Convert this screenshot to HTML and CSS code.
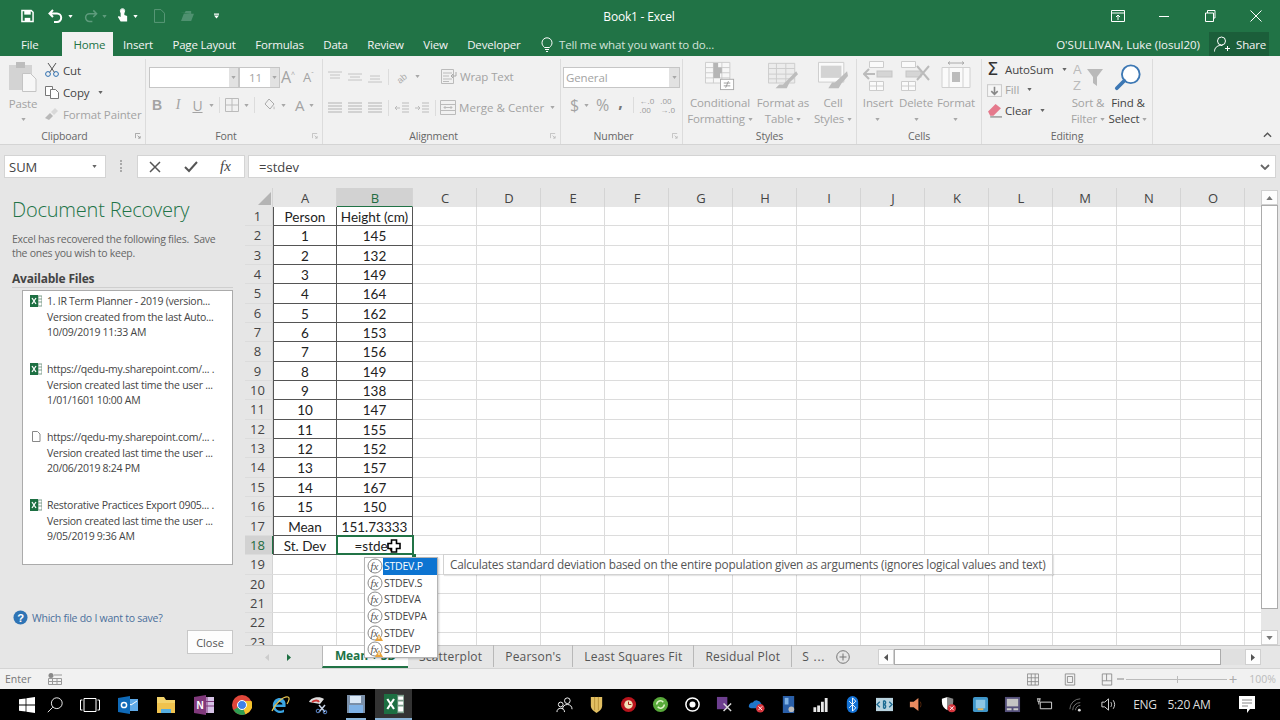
FILE: index.html
```html
<!DOCTYPE html>
<html lang="en">
<head>
<meta charset="utf-8">
<title>Book1 - Excel</title>
<link rel="stylesheet" href="styles.css">
</head>
<body>
<svg class="defs" xmlns="http://www.w3.org/2000/svg">
  <symbol id="caret" viewBox="0 0 6 4"><path d="M0 0h6L3 4z" fill="currentColor"/></symbol>
  <symbol id="xl" viewBox="0 0 12 12"><rect x="5" y="1" width="7" height="10" fill="#fff" stroke="#7c9d8b"/><path d="M8 1v10M5 4h7M5 7h7" stroke="#7c9d8b" fill="none"/><rect y="0" width="8" height="12" fill="#1d6f42"/><path d="M2 3l4 6M6 3L2 9" stroke="#fff" stroke-width="1.3"/></symbol>
  <symbol id="fxc" viewBox="0 0 16 16"><circle cx="8" cy="8" r="7" fill="#fff" stroke="#8a8a8a"/><text x="3.6" y="11.5" font-family="Liberation Serif" font-style="italic" font-size="11" fill="#555">fx</text></symbol>
  <symbol id="warn" viewBox="0 0 8 7"><path d="M4 0l4 7H0z" fill="#e8a33a"/><path d="M4 2v3" stroke="#fff"/></symbol>
  <symbol id="lines3" viewBox="0 0 14 12"><path d="M0 1h14M0 4h14M0 7h14M0 10h14" stroke="#b4b4b4" stroke-width="1.2"/></symbol>
</svg>

<header class="titlebar">
  <div class="qat">
    <svg class="qi qi-save" viewBox="0 0 14 14"><path d="M1 1h10l2 2v10H1z" fill="none" stroke="#fff" stroke-width="1.6"/><rect x="3.5" y="1.5" width="7" height="4" fill="#fff"/><rect x="4" y="9" width="6" height="4" fill="#fff"/></svg>
    <svg class="qi qi-undo" viewBox="0 0 16 14"><path d="M5 1L1.5 4.5 5 8M2 4.5h7a4.2 4.2 0 0 1 0 8.4H6" fill="none" stroke="#fff" stroke-width="2"/></svg>
    <svg class="qc" viewBox="0 0 6 4"><use href="#caret"/></svg>
    <svg class="qi qi-redo dim" viewBox="0 0 16 14"><path d="M11 1l3.5 3.5L11 8M14 4.5H7a4.2 4.2 0 0 0 0 8.4h3" fill="none" stroke="#5e9b7c" stroke-width="1.6"/></svg>
    <svg class="qc dimc" viewBox="0 0 6 4"><use href="#caret"/></svg>
    <svg class="qi qi-touch" viewBox="0 0 14 16"><path d="M5 2.5a2 2 0 0 1 4 0V7l3 1v6H5L2 9l1-1 2 1z" fill="#fff"/><circle cx="7" cy="2.5" r="2.4" fill="none" stroke="#fff"/></svg>
    <svg class="qc" viewBox="0 0 6 4"><use href="#caret"/></svg>
    <svg class="qi qi-new" viewBox="0 0 12 15"><path d="M.5.5h7l4 4v10H.5z" fill="none" stroke="#5e9b7c"/></svg>
    <svg class="qi qi-open" viewBox="0 0 16 13"><path d="M0 3h5l1-2h6v3H4L1 12h11l3-8H12" fill="#4f9170"/></svg>
    <svg class="qc qc-more" viewBox="0 0 6 6"><path d="M0 0h6v1.5H0zM0 2.5h6L3 6z" fill="#fff"/></svg>
  </div>
  <div class="doc-title">Book1 - Excel</div>
  <div class="winctl">
    <svg class="wi" viewBox="0 0 14 12"><path d="M.5.5h13v11H.5zM.5 3h13M7 10V5M5 7l2-2 2 2" fill="none" stroke="#fff"/></svg>
    <svg class="wi" viewBox="0 0 14 12"><path d="M2 6.5h10" stroke="#fff"/></svg>
    <svg class="wi" viewBox="0 0 14 12"><path d="M2.5 3v8.500h8V3zM4.500 3V.5h7.500V8h-1.500" fill="none" stroke="#fff"/></svg>
    <svg class="wi" viewBox="0 0 14 12"><path d="M1.500.5l11 11M12.500.5l-11 11" stroke="#fff"/></svg>
  </div>
</header>

<nav class="tabs">
  <span class="tab file">File</span>
  <span class="tab home">Home</span>
  <span class="tab">Insert</span>
  <span class="tab">Page Layout</span>
  <span class="tab">Formulas</span>
  <span class="tab">Data</span>
  <span class="tab">Review</span>
  <span class="tab">View</span>
  <span class="tab">Developer</span>
  <span class="tell">
    <svg class="bulb" viewBox="0 0 12 15"><path d="M3.500 10.500C2 9 1 7.800 1 5.800a5 5 0 0 1 10 0c0 2-1 3.200-2.500 4.700zM4 12.500h4M5 14.500h2" fill="none" stroke="#fff"/></svg>
    Tell me what you want to do...
  </span>
  <span class="user">O'SULLIVAN, Luke (losul20)</span>
  <span class="share">
    <svg class="shi" viewBox="0 0 16 16"><circle cx="7.500" cy="5" r="4" fill="none" stroke="#fff"/><path d="M.5 15.500c0-3.500 2.500-6 6-6h2M11 12.500h5M13.500 10v5" fill="none" stroke="#fff"/></svg>
    Share
  </span>
</nav>

<section class="ribbon">
  <div class="group g-clip">
    <div class="g-body">
      <div class="paste off">
        <svg class="paste-i" viewBox="0 0 28 30"><rect x="0" y="3" width="23" height="25" fill="#d3d3d3"/><rect x="7" y="0" width="9" height="6" fill="#bdbdbd"/><path d="M13.500 11.500h8l5.500 5.500v12.500H13.500z" fill="#f7f7f7" stroke="#c4c4c4"/></svg>
        <span class="paste-t">Paste</span>
        <svg class="car" viewBox="0 0 6 4"><use href="#caret"/></svg>
      </div>
      <div class="clip-col">
        <div class="clip-row on"><svg class="ci" viewBox="0 0 14 14"><path d="M3 0l6.500 9.500M11 0L4.500 9.500" stroke="#555" fill="none"/><circle cx="3" cy="11" r="2.400" fill="none" stroke="#2d6fb0"/><circle cx="11" cy="11" r="2.400" fill="none" stroke="#2d6fb0"/></svg>Cut</div>
        <div class="clip-row on"><svg class="ci" viewBox="0 0 14 14"><path d="M.5 1.500h7v9h-7z" fill="#fff" stroke="#777"/><path d="M5.500 4.500h5l3 3v6h-8z" fill="#fff" stroke="#777"/></svg>Copy<svg class="car car-s" viewBox="0 0 6 4"><use href="#caret"/></svg></div>
        <div class="clip-row off"><svg class="ci" viewBox="0 0 14 14"><path d="M0 11l5-5 3 3-4 4z" fill="#b9b9b9"/><path d="M6 5l4-4 3 3-4 4z" fill="#d9d9d9"/></svg>Format Painter</div>
      </div>
    </div>
    <div class="g-label g-l">Clipboard<svg class="launcher" viewBox="0 0 7 7"><path d="M.5 6V.5H6M3 3l3 3M6 3.500V6H3.500" fill="none" stroke="#999"/></svg></div>
  </div>

  <div class="group g-font">
    <div class="g-body col">
      <div class="r1">
        <div class="combo c-font"><span></span><i><svg class="car" viewBox="0 0 6 4"><use href="#caret"/></svg></i></div>
        <div class="combo c-size"><span>11</span><i><svg class="car" viewBox="0 0 6 4"><use href="#caret"/></svg></i></div>
        <span class="bigA off">A<sup>^</sup></span><span class="smA off">A<sup>ˇ</sup></span>
      </div>
      <div class="r2 off">
        <b class="fb">B</b><i class="fi">I</i><u class="fu">U</u>
        <svg class="car" viewBox="0 0 6 4"><use href="#caret"/></svg>
        <span class="vsep"></span>
        <svg class="ic14" viewBox="0 0 14 14"><path d="M.5.5h13v13H.5zM7 .5v13M.5 7h13" fill="none" stroke="#bbb"/></svg>
        <svg class="car" viewBox="0 0 6 4"><use href="#caret"/></svg>
        <span class="vsep"></span>
        <svg class="ic14 ic-fill" viewBox="0 0 14 14"><path d="M3 6l4-5 5 5-4 5z" fill="none" stroke="#aaa"/><path d="M12 8c1 1.500 1.500 3 0 3.500-1-.5-1-2 0-3.500z" fill="#ccc"/></svg>
        <svg class="car" viewBox="0 0 6 4"><use href="#caret"/></svg>
        <span class="colorA">A</span>
        <svg class="car" viewBox="0 0 6 4"><use href="#caret"/></svg>
      </div>
    </div>
    <div class="g-label g-l">Font<svg class="launcher" viewBox="0 0 7 7"><path d="M.5 6V.5H6M3 3l3 3M6 3.500V6H3.500" fill="none" stroke="#bbb"/></svg></div>
  </div>

  <div class="group g-align">
    <div class="g-body col">
      <div class="a-row a-top off">
        <svg class="al" viewBox="0 0 14 12"><path d="M0 1h14M2 4h10M2 7h10" stroke="#c4c4c4"/></svg>
        <svg class="al" viewBox="0 0 14 12"><path d="M0 3h14M2 6h10M0 9h14" stroke="#c4c4c4"/></svg>
        <svg class="al" viewBox="0 0 14 12"><path d="M2 5h10M2 8h10M0 11h14" stroke="#c4c4c4"/></svg>
        <span class="vsep"></span>
        <svg class="ic14" viewBox="0 0 14 14"><text x="1" y="11" font-size="9" fill="#aaa" font-family="Liberation Sans" transform="rotate(-40 7 7)">ab</text></svg>
        <svg class="car" viewBox="0 0 6 4"><use href="#caret"/></svg>
        <span class="vsep vsep-mid"></span>
        <svg class="wr" viewBox="0 0 16 15"><path d="M.5.5h12v14H.5zM2 4h9M2 7h6M2 10h9M2 12.500h6" fill="none" stroke="#bbb"/><path d="M15 3v4h-5l2-2M10 7l2 2" fill="none" stroke="#aaa"/></svg>
        <span>Wrap Text</span>
      </div>
      <div class="a-row a-bot off">
        <svg class="al" viewBox="0 0 14 12"><use href="#lines3"/></svg>
        <svg class="al" viewBox="0 0 14 12"><use href="#lines3"/></svg>
        <svg class="al" viewBox="0 0 14 12"><use href="#lines3"/></svg>
        <span class="vsep"></span>
        <svg class="al" viewBox="0 0 14 12"><path d="M5 6L0 6M2 4L0 6l2 2M7 1h7M7 4h7M7 7h7M7 10h7" stroke="#bbb" fill="none"/></svg>
        <svg class="al" viewBox="0 0 14 12"><path d="M0 6h5M3 4l2 2-2 2M7 1h7M7 4h7M7 7h7M7 10h7" stroke="#bbb" fill="none"/></svg>
        <span class="vsep"></span>
        <svg class="mg" viewBox="0 0 16 15"><path d="M.5.5h15v14H.5zM.5 4.500h15M.5 10.500h15M4 7.500h8M5.500 6L4 7.500 5.500 9M10.500 6L12 7.500 10.500 9" fill="none" stroke="#bbb"/></svg>
        <span class="mg-t">Merge &amp; Center</span>
        <svg class="car" viewBox="0 0 6 4"><use href="#caret"/></svg>
      </div>
    </div>
    <div class="g-label g-l">Alignment<svg class="launcher" viewBox="0 0 7 7"><path d="M.5 6V.5H6M3 3l3 3M6 3.500V6H3.500" fill="none" stroke="#bbb"/></svg></div>
  </div>

  <div class="group g-num">
    <div class="g-body col">
      <div class="combo c-gen"><span>General</span><i><svg class="car" viewBox="0 0 6 4"><use href="#caret"/></svg></i></div>
      <div class="n-row off">
        <span class="sym">$</span><svg class="car" viewBox="0 0 6 4"><use href="#caret"/></svg>
        <span class="sym pct">%</span><b class="comma">,</b>
        <span class="vsep"></span>
        <span class="dec">←.0<br>.00</span><span class="dec">.00<br>→.0</span>
      </div>
    </div>
    <div class="g-label g-l">Number<svg class="launcher" viewBox="0 0 7 7"><path d="M.5 6V.5H6M3 3l3 3M6 3.500V6H3.500" fill="none" stroke="#bbb"/></svg></div>
  </div>

  <div class="group g-styles">
    <div class="g-body big-row off">
      <div class="big w-cond">
        <svg class="bi" viewBox="0 0 32 30"><path d="M.5.5h26v22H.5zM.5 6h26M.5 11.500h26M.5 17h26M9 .5v22M18 .5v22" fill="#f7f7f7" stroke="#ccc"/><path d="M9 1h5v5h4v6h-2v5H9z" fill="#b5b5b5"/><rect x="16.500" y="18.500" width="14" height="11" fill="#fff" stroke="#aaa"/><path d="M20 22.500h7M20 25.500h7M25 20.500l-3 7" stroke="#999" fill="none"/></svg>
        <span>Conditional<br>Formatting <svg class="car" viewBox="0 0 6 4"><use href="#caret"/></svg></span>
      </div>
      <div class="big w-fmt">
        <svg class="bi" viewBox="0 0 32 30"><path d="M.5 1.500h28v21H.5zM.5 7h28M.5 13h28M.5 18h28M9 1.500v21M19 1.500v21" fill="#ececec" stroke="#ccc"/><path d="M30 10L16 24l-4 0L8 28h12l3-6 9-9z" fill="#bdbdbd"/></svg>
        <span>Format as<br>Table <svg class="car" viewBox="0 0 6 4"><use href="#caret"/></svg></span>
      </div>
      <div class="big w-cell">
        <svg class="bi" viewBox="0 0 32 30"><path d="M.5.5h27v21H.5z" fill="#fafafa" stroke="#ccc"/><rect x="3" y="4" width="22" height="13" fill="#d3d3d3"/><path d="M31 10L18 22l-3 0L11 28h11l3-5 7-8z" fill="#bdbdbd"/></svg>
        <span>Cell<br>Styles <svg class="car" viewBox="0 0 6 4"><use href="#caret"/></svg></span>
      </div>
    </div>
    <div class="g-label">Styles</div>
  </div>

  <div class="group g-cells">
    <div class="g-body big-row off">
      <div class="big w-ins">
        <svg class="bi" viewBox="0 0 30 30"><path d="M6.500.5h14v6h-14zM6.500 20.500h14v9h-14zM13.500 20.500v9M6.500 25h14" fill="#fafafa" stroke="#ccc"/><rect x="14" y="10" width="15" height="6" fill="#d5d5d5" stroke="#c5c5c5"/><path d="M12 13H1M6 8l-5 5 5 5" fill="none" stroke="#bbb" stroke-width="2"/></svg>
        <span>Insert<br><svg class="car" viewBox="0 0 6 4"><use href="#caret"/></svg></span>
      </div>
      <div class="big w-del">
        <svg class="bi" viewBox="0 0 30 30"><path d="M.5.5h14v6H.5zM.5 20.500h14v9H.5zM7.500 20.500v9M.5 25h14" fill="#fafafa" stroke="#ccc"/><rect x="5" y="10" width="15" height="6" fill="#d5d5d5" stroke="#c5c5c5"/><path d="M16 5l12 14M28 5L16 19" stroke="#bbb" stroke-width="2"/></svg>
        <span>Delete<br><svg class="car" viewBox="0 0 6 4"><use href="#caret"/></svg></span>
      </div>
      <div class="big w-fm">
        <svg class="bi" viewBox="0 0 30 30"><path d="M1 6.500h28v20H1zM8 6.500v20M22 6.500v20M1 26.500" fill="#fafafa" stroke="#d0d0d0"/><rect x="11" y="11" width="8" height="10" fill="#bcbcbc"/><path d="M7 2h16M7 2l2-1.500M7 2l2 1.500M23 2l-2-1.500M23 2l-2 1.500" stroke="#aaa" fill="none"/></svg>
        <span>Format<br><svg class="car" viewBox="0 0 6 4"><use href="#caret"/></svg></span>
      </div>
    </div>
    <div class="g-label">Cells</div>
  </div>

  <div class="group g-edit">
    <div class="g-body">
      <div class="edit-col">
        <div class="e-row on"><span class="sigma">Σ</span>AutoSum<svg class="car car-s car-as" viewBox="0 0 6 4"><use href="#caret"/></svg></div>
        <div class="e-row off"><svg class="ci2" viewBox="0 0 14 14"><rect x=".5" y="2.500" width="13" height="11" fill="#f6f6f6" stroke="#ccc"/><path d="M7 4.500v7M4 8.500l3 3 3-3" stroke="#888" fill="none" stroke-width="1.500"/></svg>Fill<svg class="car car-s" viewBox="0 0 6 4"><use href="#caret"/></svg></div>
        <div class="e-row on"><svg class="ci2" viewBox="0 0 14 14"><path d="M1 8l7-7 5 4-7 7H3z" fill="#e5798c"/><path d="M3 13h11" stroke="#777"/></svg>Clear<svg class="car car-s" viewBox="0 0 6 4"><use href="#caret"/></svg></div>
      </div>
      <div class="big w-sort off">
        <svg class="bi bi-sort" viewBox="0 0 30 30"><text x="0" y="12" font-size="13" fill="#bbb" font-family="Liberation Sans">A</text><text x="0" y="28" font-size="13" fill="#bbb" font-family="Liberation Sans">Z</text><path d="M14 7h16l-6 8v9l-4-3v-6z" fill="#b9b9b9"/></svg>
        <span>Sort &amp;<br>Filter <svg class="car" viewBox="0 0 6 4"><use href="#caret"/></svg></span>
      </div>
      <div class="big w-find on">
        <svg class="bi" viewBox="0 0 30 30"><circle cx="18" cy="11" r="9.500" fill="#fff" stroke="#3d78b4" stroke-width="2"/><path d="M11 18L3 26" stroke="#3d78b4" stroke-width="4" stroke-linecap="round"/></svg>
        <span>Find &amp;<br>Select <svg class="car" viewBox="0 0 6 4"><use href="#caret"/></svg></span>
      </div>
    </div>
    <div class="g-label">Editing</div>
  </div>
  <div class="collapse"><svg class="coll" viewBox="0 0 10 6"><path d="M1 5l4-4 4 4" fill="none" stroke="#555" stroke-width="1.500"/></svg></div>
</section>

<section class="fbar">
  <div class="namebox"><span>SUM</span><svg class="car" viewBox="0 0 6 4"><use href="#caret"/></svg></div>
  <div class="dots"></div>
  <div class="fbtns">
    <svg class="fx-x" viewBox="0 0 12 12"><path d="M1 1l10 10M11 1L1 11" stroke="#555" stroke-width="1.500"/></svg>
    <svg class="fx-c" viewBox="0 0 14 12"><path d="M1 6l4 4 8-9" fill="none" stroke="#555" stroke-width="2"/></svg>
    <span class="fx-f">fx</span>
  </div>
  <div class="finput"><span>=stdev</span><svg class="chev" viewBox="0 0 10 6"><path d="M1 1l4 4 4-4" fill="none" stroke="#666" stroke-width="1.800"/></svg></div>
</section>

<main class="main">
  <aside class="panel">
    <h1 class="p-title">Document Recovery</h1>
    <p class="p-desc">Excel has recovered the following files.&nbsp; Save the ones you wish to keep.</p>
    <h2 class="p-sub">Available Files</h2>
    <div class="flist">
      <div class="fitem"><svg class="xi" viewBox="0 0 12 12"><use href="#xl"/></svg><div><div>1. IR Term Planner - 2019 (version...</div><div>Version created from the last Auto...</div><div>10/09/2019 11:33 AM</div></div></div>
      <div class="fitem"><svg class="xi" viewBox="0 0 12 12"><use href="#xl"/></svg><div><div>https://qedu-my.sharepoint.com/... .</div><div>Version created last time the user ...</div><div>1/01/1601 10:00 AM</div></div></div>
      <div class="fitem"><svg class="xi" viewBox="0 0 12 12"><path d="M2.500.5h5l2.500 2.500v7.500H2.500z" fill="#fff" stroke="#888"/></svg><div><div>https://qedu-my.sharepoint.com/... .</div><div>Version created last time the user ...</div><div>20/06/2019 8:24 PM</div></div></div>
      <div class="fitem"><svg class="xi" viewBox="0 0 12 12"><use href="#xl"/></svg><div><div>Restorative Practices Export 0905... .</div><div>Version created last time the user ...</div><div>9/05/2019 9:36 AM</div></div></div>
    </div>
    <div class="p-help"><svg class="hi" viewBox="0 0 16 16"><circle cx="8" cy="8" r="7.500" fill="#2f74b5"/><text x="4.600" y="12.500" font-size="12" font-weight="700" fill="#fff" font-family="Liberation Sans">?</text></svg>Which file do I want to save?</div>
    <div class="p-foot"><button class="close">Close</button></div>
  </aside>

  <div class="work">
    <div class="sheet-top">
      <div class="sheet">
        <div class="colhead">
          <div class="corner"><svg class="tri" viewBox="0 0 14 14"><path d="M14 0v14H0z" fill="#b4b4b4"/></svg></div>
          <div class="ch ca">A</div><div class="ch cb active">B</div>
          <div class="ch">C</div><div class="ch">D</div><div class="ch">E</div><div class="ch">F</div><div class="ch">G</div><div class="ch">H</div><div class="ch">I</div><div class="ch">J</div><div class="ch">K</div><div class="ch">L</div><div class="ch">M</div><div class="ch">N</div><div class="ch">O</div>
        </div>
        <div class="rows">
          <div class="row"><div class="rh">1</div><div class="c ca d">Person</div><div class="c cb d">Height (cm)</div><div class="fill"></div></div>
          <div class="row"><div class="rh">2</div><div class="c ca d">1</div><div class="c cb d">145</div><div class="fill"></div></div>
          <div class="row"><div class="rh">3</div><div class="c ca d">2</div><div class="c cb d">132</div><div class="fill"></div></div>
          <div class="row"><div class="rh">4</div><div class="c ca d">3</div><div class="c cb d">149</div><div class="fill"></div></div>
          <div class="row"><div class="rh">5</div><div class="c ca d">4</div><div class="c cb d">164</div><div class="fill"></div></div>
          <div class="row"><div class="rh">6</div><div class="c ca d">5</div><div class="c cb d">162</div><div class="fill"></div></div>
          <div class="row"><div class="rh">7</div><div class="c ca d">6</div><div class="c cb d">153</div><div class="fill"></div></div>
          <div class="row"><div class="rh">8</div><div class="c ca d">7</div><div class="c cb d">156</div><div class="fill"></div></div>
          <div class="row"><div class="rh">9</div><div class="c ca d">8</div><div class="c cb d">149</div><div class="fill"></div></div>
          <div class="row"><div class="rh">10</div><div class="c ca d">9</div><div class="c cb d">138</div><div class="fill"></div></div>
          <div class="row"><div class="rh">11</div><div class="c ca d">10</div><div class="c cb d">147</div><div class="fill"></div></div>
          <div class="row"><div class="rh">12</div><div class="c ca d">11</div><div class="c cb d">155</div><div class="fill"></div></div>
          <div class="row"><div class="rh">13</div><div class="c ca d">12</div><div class="c cb d">152</div><div class="fill"></div></div>
          <div class="row"><div class="rh">14</div><div class="c ca d">13</div><div class="c cb d">157</div><div class="fill"></div></div>
          <div class="row"><div class="rh">15</div><div class="c ca d">14</div><div class="c cb d">167</div><div class="fill"></div></div>
          <div class="row"><div class="rh">16</div><div class="c ca d">15</div><div class="c cb d">150</div><div class="fill"></div></div>
          <div class="row"><div class="rh">17</div><div class="c ca d">Mean</div><div class="c cb d">151.73333</div><div class="fill"></div></div>
          <div class="row"><div class="rh rh-on">18</div><div class="c ca d">St. Dev</div><div class="c cb d sel">=stdev</div><div class="fill"></div></div>
          <div class="row"><div class="rh">19</div><div class="c ca"></div><div class="c cb"></div><div class="fill"></div></div>
          <div class="row"><div class="rh">20</div><div class="c ca"></div><div class="c cb"></div><div class="fill"></div></div>
          <div class="row"><div class="rh">21</div><div class="c ca"></div><div class="c cb"></div><div class="fill"></div></div>
          <div class="row"><div class="rh">22</div><div class="c ca"></div><div class="c cb"></div><div class="fill"></div></div>
          <div class="row"><div class="rh">23</div><div class="c ca"></div><div class="c cb"></div><div class="fill"></div></div>
        </div>
      </div>
      <div class="vscroll">
        <div class="sb-btn"><svg class="sb-a" viewBox="0 0 8 5"><path d="M4 0l4 5H0z" fill="#777"/></svg></div>
        <div class="sb-thumb"></div>
        <div class="sb-track"></div>
        <div class="sb-btn"><svg class="sb-a" viewBox="0 0 8 5"><path d="M4 5l4-5H0z" fill="#777"/></svg></div>
      </div>
    </div>
    <div class="sheettabs">
      <svg class="nav nav1" viewBox="0 0 4 7"><path d="M4 0v7L0 3.500z" fill="#ccc"/></svg>
      <svg class="nav nav2" viewBox="0 0 4 7"><path d="M0 0v7l4-3.500z" fill="#1d6f42"/></svg>
      <span class="st st-on">Mean + SD</span>
      <span class="st">Scatterplot</span>
      <span class="st">Pearson's</span>
      <span class="st">Least Squares Fit</span>
      <span class="st">Residual Plot</span>
      <span class="st st-cut">S ...</span>
      <svg class="plus" viewBox="0 0 14 14"><circle cx="7" cy="7" r="6.300" fill="none" stroke="#777"/><path d="M3.500 7h7M7 3.500v7" stroke="#777"/></svg>
      <div class="hscroll">
        <div class="hb"><svg class="hba" viewBox="0 0 4 7"><path d="M4 0v7L0 3.500z" fill="#555"/></svg></div>
        <div class="hthumb"></div>
        <div class="htrack"></div>
        <div class="hb"><svg class="hba" viewBox="0 0 4 7"><path d="M0 0v7l4-3.500z" fill="#555"/></svg></div>
      </div>
    </div>

    <div class="ac">
      <div class="ac-i"><svg class="fxi" viewBox="0 0 16 16"><use href="#fxc"/></svg><span class="ac-on">STDEV.P</span></div>
      <div class="ac-i"><svg class="fxi" viewBox="0 0 16 16"><use href="#fxc"/></svg><span>STDEV.S</span></div>
      <div class="ac-i"><svg class="fxi" viewBox="0 0 16 16"><use href="#fxc"/></svg><span>STDEVA</span></div>
      <div class="ac-i"><svg class="fxi" viewBox="0 0 16 16"><use href="#fxc"/></svg><span>STDEVPA</span></div>
      <div class="ac-i"><svg class="fxi" viewBox="0 0 16 16"><use href="#fxc"/><use href="#warn" x="8" y="9" width="8" height="7"/></svg><span>STDEV</span></div>
      <div class="ac-i"><svg class="fxi" viewBox="0 0 16 16"><use href="#fxc"/><use href="#warn" x="8" y="9" width="8" height="7"/></svg><span>STDEVP</span></div>
    </div>
    <div class="tip">Calculates standard deviation based on the entire population given as arguments (ignores logical values and text)</div>
    <svg class="cursor" viewBox="0 0 14 14"><path d="M4.500 1h5v3.500H13v5H9.500V13h-5V9.500H1v-5h3.500z" fill="#fff" stroke="#000" stroke-width="1.600"/></svg>
    <span class="handle"></span>
  </div>
</main>

<footer class="status">
  <span class="s-enter">Enter</span>
  <svg class="s-macro" viewBox="0 0 14 12"><circle cx="3" cy="2.500" r="2.500" fill="#888"/><path d="M6 2h8M.5 5.500h13v6H.5zM.5 8.500h13M4.500 5.500v6M9 5.500v6" fill="none" stroke="#999"/></svg>
  <div class="s-right">
    <svg class="vw" viewBox="0 0 14 14"><path d="M.5.5h13v13H.5zM5 .5v13M9.500.5v13M.5 5h13M.5 9.500h13" fill="none" stroke="#888"/></svg>
    <svg class="vw" viewBox="0 0 14 14"><path d="M1.500.5h11v13h-11zM4 3.500h6v7H4z" fill="none" stroke="#888"/></svg>
    <svg class="vw" viewBox="0 0 14 14"><path d="M1.500.5h11v13h-11zM6.500.5v8h-5M6.500 8.500h6" fill="none" stroke="#888"/></svg>
    <div class="zoom"><span class="z-m"></span><span class="z-line"><i></i></span><span class="z-p">+</span></div>
    <span class="z-val">100%</span>
  </div>
</footer>

<footer class="taskbar">
  <div class="tb-left">
    <svg class="ti-win" viewBox="0 0 16 16"><path d="M0 2.300L6.600 1.400v6.200H0zM7.400 1.300L16 0v7.600H7.400zM0 8.400h6.600v6.200L0 13.700zM7.400 8.400H16V16l-8.600-1.300z" fill="#fff"/></svg>
    <svg class="ti ti-search" viewBox="0 0 20 20"><circle cx="12" cy="8" r="6" fill="none" stroke="#fff"/><path d="M7.500 12.500L2 18" stroke="#fff"/></svg>
    <svg class="ti ti-view" viewBox="0 0 20 20"><path d="M4 3.500h12v13H4zM2.500 5H.5v10h2M17.500 5h2v10h-2" fill="none" stroke="#fff"/></svg>
    <svg class="ti" viewBox="0 0 20 20"><rect x="7" y="4" width="13" height="12" fill="#5fa9e6"/><path d="M8 6l5 4 6-4" fill="none" stroke="#fff"/><path d="M0 3l12-2v18L0 17z" fill="#0f6ab8"/><circle cx="6" cy="10" r="2.600" fill="none" stroke="#fff" stroke-width="1.500"/></svg>
    <svg class="ti" viewBox="0 0 20 20"><path d="M1 2h7l2 3h9v4H1z" fill="#f3d36c"/><rect x="1" y="8" width="18" height="10" fill="#efc24e"/><path d="M5 14h10v4H5z" fill="#56aee0"/></svg>
    <svg class="ti" viewBox="0 0 20 20"><rect x="7" y="2" width="13" height="16" fill="#d6c2e6"/><path d="M13 2v16M7 6.500h13M7 11h13" stroke="#80397b"/><path d="M0 2l12-2v20L0 18z" fill="#80397b"/><text x="2.500" y="13.500" font-size="10" font-weight="700" fill="#fff" font-family="Liberation Sans">N</text></svg>
    <svg class="ti" viewBox="0 0 20 20"><circle cx="10" cy="10" r="10" fill="#e0463a"/><path d="M10 10L1.500 15a10 10 0 0 0 12 4.300z" fill="#2f9e52"/><path d="M10 10l3.500 9.300A10 10 0 0 0 19.500 6H10z" fill="#f5c32c"/><circle cx="10" cy="10" r="4.500" fill="#3f80e8" stroke="#fff"/></svg>
    <svg class="ti" viewBox="0 0 20 20"><path d="M15.500 12h-10c.4 3.500 4.800 5 8.500 2.500v2.800C8.500 19.500 2.800 16.500 2.800 10.500 2.800 5 7.500 2.500 11 3.200c3.500.6 5.200 3.500 4.500 8.800zM5.500 9.500h7C12.300 6.300 6.500 6 5.500 9.500z" fill="#3ba5e2"/><path d="M2 16C6 7 14 1 18 2c2 .6 1 4-1 7" fill="none" stroke="#eac54f" stroke-width="1.200"/></svg>
    <svg class="ti" viewBox="0 0 20 20"><path d="M1 7c2-5 11-6 15-3l-4 5z" fill="#ddd"/><path d="M4 7c3-2 6-2 7 0" stroke="#c33" fill="none" stroke-width="2"/><path d="M11 10l6 7M17 10l-6 7" stroke="#c9d5e8" stroke-width="1.500"/><circle cx="10" cy="16" r="1.800" fill="none" stroke="#5b86c9"/><circle cx="17" cy="17" r="1.800" fill="none" stroke="#5b86c9"/></svg>
    <span class="t-run"><svg class="ti" viewBox="0 0 20 20"><rect x="1" y="1" width="18" height="18" fill="#7a8fa8"/><rect x="4" y="2" width="11" height="7" fill="#d9e7f5"/><rect x="3" y="11" width="14" height="8" fill="#7fb2e6"/></svg></span>
    <span class="t-active"><svg class="ti" viewBox="0 0 20 20"><use href="#xl"/></svg></span>
  </div>
  <div class="tb-right">
    <span class="slot"><svg class="ti16" viewBox="0 0 18 18"><circle cx="12" cy="5" r="3" fill="none" stroke="#fff"/><path d="M7 14c0-3 2-5 5-5s5 2 5 5" fill="none" stroke="#fff"/><circle cx="5" cy="9" r="2.500" fill="none" stroke="#fff"/><path d="M1 17c0-2.500 1.500-4 4-4s4 1.500 4 4" fill="none" stroke="#fff"/></svg></span>
    <span class="slot"><svg class="ti16" viewBox="0 0 18 18"><path d="M3 1h12v9c0 4-3 6-6 8-3-2-6-4-6-8z" fill="#e2bf62"/><path d="M7 1v14M11 1v14" stroke="#b8923a"/></svg></span>
    <span class="slot"><svg class="ti16" viewBox="0 0 18 18"><circle cx="9" cy="9" r="8" fill="#b8141c"/><circle cx="9" cy="9" r="4.500" fill="#f1e2b8"/><path d="M9 6v3h3" stroke="#a11" fill="none"/></svg></span>
    <span class="slot"><svg class="ti16" viewBox="0 0 18 18"><circle cx="9" cy="9" r="8" fill="#58a93a"/><path d="M5 9a4 4 0 0 1 7-2.500M13 9a4 4 0 0 1-7 2.500" fill="none" stroke="#dff3c9" stroke-width="1.600"/></svg></span>
    <span class="slot"><svg class="ti16" viewBox="0 0 18 18"><circle cx="9" cy="9" r="7" fill="none" stroke="#fff" stroke-width="1.600"/><circle cx="9" cy="9" r="3.200" fill="#fff"/></svg></span>
    <span class="slot"><svg class="ti16" viewBox="0 0 18 18"><rect x="1" y="1" width="11" height="13" fill="#6d3f8f"/><path d="M8 8l8 8M16 8l-8 8" stroke="#ddd" stroke-width="1.500"/></svg></span>
    <span class="slot"><svg class="ti16" viewBox="0 0 18 18"><path d="M1 12a4 4 0 0 1 4-5 5 5 0 0 1 9 1v5H3z" fill="#1f75c9"/><circle cx="13" cy="13" r="4.500" fill="#d8333b"/><path d="M11 11l4 4M15 11l-4 4" stroke="#fff"/></svg></span>
    <span class="slot"><svg class="ti16" viewBox="0 0 18 18"><rect x="3" y="0" width="12" height="18" fill="#2a5fa8"/><rect x="5" y="2" width="4" height="7" fill="#7fb2e6"/><circle cx="12" cy="14" r="3" fill="#bbb"/></svg></span>
    <span class="slot"><svg class="ti16" viewBox="0 0 18 18"><path d="M1.500 17v-5h3v5zM5.500 17v-7h3v7zM9.500 17V6h3v11zM13.500 17V2h3v15z" fill="#e9e9e9"/></svg></span>
    <span class="slot"><svg class="ti16" viewBox="0 0 18 18"><rect x="3" y="0" width="12" height="18" rx="6" fill="#1372d6"/><path d="M5.500 5.500l7 7L9 16V2l3.500 3.500-7 7" fill="none" stroke="#fff"/></svg></span>
    <span class="slot"><svg class="ti16" viewBox="0 0 18 18"><rect x="0" y="2" width="18" height="14" fill="#b9d3df"/><path d="M4 6L1 9l3 3M14 6l3 3-3 3M8 5v8M8 5c3 0 3 4 0 4 3 0 3 4 0 4" fill="none" stroke="#1d6b92" stroke-width="1.400"/></svg></span>
    <span class="slot"><svg class="ti16" viewBox="0 0 18 18"><path d="M2 6h4l5-4v14l-5-4H2z" fill="#e88a5f"/><path d="M13 6c1 2 1 4 0 6" stroke="#58290f" fill="none"/></svg></span>
    <span class="slot"><svg class="ti16" viewBox="0 0 18 18"><path d="M2 3l6-2v14c-4-2-6-5-6-9z" fill="#fff"/><path d="M8 1l6 2v3c0 4-2 7-6 9z" fill="#888"/><circle cx="12.500" cy="13" r="4.300" fill="#d8333b"/><path d="M10.500 11l4 4M14.500 11l-4 4" stroke="#fff"/></svg></span>
    <span class="slot"><svg class="ti16" viewBox="0 0 18 18"><rect x="1" y="1" width="16" height="16" rx="2" fill="#3f96c9"/><rect x="4" y="4" width="10" height="9" fill="#8cc6e6"/><path d="M6 14h6" stroke="#e8b55a" stroke-width="2"/></svg></span>
    <span class="slot"><svg class="ti16" viewBox="0 0 18 18"><rect x="1" y="1" width="16" height="16" fill="#55507a"/><rect x="3" y="3" width="12" height="8" fill="#c4c4c4"/><path d="M3 14h5M10 14h5" stroke="#ccc" stroke-width="2"/></svg></span>
    <span class="slot"><svg class="ti16" viewBox="0 0 18 18"><path d="M4.500 6.500h12v7h-12zM1 3h4M2 3v3h2V3M3 6v3" fill="none" stroke="#ddd"/></svg></span>
    <span class="slot"><svg class="ti16" viewBox="0 0 18 18"><path d="M2 14a11 11 0 0 1 11-11M5 15a8 8 0 0 1 8-8M8 15a5 5 0 0 1 5-5" fill="none" stroke="#777"/><circle cx="12" cy="15" r="1.500" fill="#ddd"/></svg></span>
    <span class="slot"><svg class="ti16" viewBox="0 0 18 18"><path d="M2 6.500h3L9 3v12l-4-3.500H2z" fill="none" stroke="#ddd"/><path d="M11.500 6.500c1 1.500 1 3.500 0 5M14 4.500c2 3 2 6 0 9" fill="none" stroke="#ddd"/></svg></span>
    <span class="t-text t-eng">ENG</span>
    <span class="t-text t-time">5:20 AM</span>
    <span class="t-note"><svg class="ti-note" viewBox="0 0 16 18"><path d="M0 0h16v13H11l-3 4v-4H0z" fill="#fff"/><path d="M3 4h10M3 7h10M3 10h6" stroke="#888"/></svg></span>
  </div>
</footer>
</body>
</html>
```

FILE: styles.css
```css
* { box-sizing: border-box; }
html, body { margin: 0; padding: 0; }
body {
  width: 1280px; height: 720px; overflow: hidden;
  display: flex; flex-direction: column;
  font-family: "Open Sans", "Noto Sans", sans-serif;
  font-size: 12px; color: #444; background: #e6e6e6;
}
svg { display: block; flex: none; }
.defs { display: none; }
.car { width: 5px; height: 3px; color: #a8a8a8; display: inline-block; vertical-align: middle; }
.car-s { margin-left: 5px; color: #666; }
.car-as { margin-left: 5px; }
.off { color: #a3a3a3; }
.on { color: #444; }

/* title bar */
.titlebar { height: 32px; flex: none; background: #217346; color: #fff; display: flex; align-items: center; }
.qat { width: 564px; display: flex; align-items: center; padding-left: 21px; color: #fff; }
.qi { height: 14px; }
.qi-save { width: 13px; }
.qi-undo { width: 16px; margin-left: 14px; }
.qc { width: 5px; height: 3px; margin-left: 4px; color: #fff; }
.dimc { color: #5e9b7c; }
.qi-redo { width: 15px; margin-left: 10px; }
.qi-touch { width: 13px; height: 16px; margin-left: 9px; }
.qi-new { width: 11px; height: 14px; margin-left: 16px; }
.qi-open { width: 15px; height: 12px; margin-left: 15px; }
.qc-more { height: 6px; margin-left: 19px; }
.doc-title { width: 150px; text-align: center; font-size: 12px; letter-spacing: -.2px; }
.winctl { margin-left: auto; display: flex; padding-right: 17px; gap: 32px; align-items: center; }
.wi { width: 14px; height: 12px; }

/* tabs */
.tabs { height: 24px; flex: none; background: #217346; color: #f4f4f4; display: flex; align-items: stretch; padding-left: 21px; font-size: 11.500px; letter-spacing: -.18px; }
.tab { display: flex; align-items: center; margin-right: 19.500px; }
.tab.file { margin-right: 13px; padding-right: 0; }
.tab.home { background: #f1f1f1; color: #217346; padding: 0 10px 0 11px; margin-left: 11px; margin-right: 9.500px; width: 51px; }
.tell { display: flex; align-items: center; gap: 6px; color: #d3e3da; margin-left: 1px; }
.bulb { width: 12px; height: 15px; }
.user { margin-left: auto; display: flex; align-items: center; margin-right: 9px; color: #f4f4f4; letter-spacing: 0; }
.share { background: #1b5e3a; width: 60px; margin-right: 11px; display: flex; align-items: center; gap: 6px; padding-left: 5px; }
.shi { width: 16px; height: 16px; }

/* ribbon */
.ribbon { height: 89px; flex: none; background: #f1f1f1; border-bottom: 1px solid #d4d4d4; display: flex; position: relative; font-size: 11.500px; letter-spacing: -.12px; }
.group { display: flex; flex-direction: column; border-right: 1px solid #dcdcdc; margin: 3px 0 0; flex: none; }
.g-body { flex: 1; display: flex; min-height: 0; }
.g-body.col { flex-direction: column; }
.g-label { height: 16px; text-align: center; font-size: 10.500px; color: #666; position: relative; letter-spacing: -.15px; line-height: 16px; }
.g-l { padding-right: 16px; }
.launcher { width: 6px; height: 6px; position: absolute; right: 4px; top: 5px; }
.g-clip { width: 146px; }
.g-font { width: 177px; }
.g-align { width: 238px; }
.g-num { width: 122px; }
.g-styles { width: 174px; }
.g-cells { width: 125px; }
.g-edit { width: 171px; }

.paste { width: 38px; margin-left: 4px; display: flex; flex-direction: column; align-items: center; }
.paste-i { width: 28px; height: 30px; margin-top: 3px; }
.paste-t { margin-top: 4px; }
.paste .car { margin-top: 7px; }
.clip-col { margin-left: 3px; display: flex; flex-direction: column; }
.clip-row { height: 22px; display: flex; align-items: center; gap: 4px; white-space: nowrap; }
.clip-row .ci { width: 14px; height: 14px; }

.combo { height: 21px; background: #fff; border: 1px solid #c6c6c6; display: flex; align-items: center; justify-content: space-between; padding-left: 2px; color: #a3a3a3; }
.combo i { width: 9px; align-self: stretch; background: #e2e2e2; display: flex; align-items: center; justify-content: center; }
.c-font { width: 90px; }
.c-size { width: 41px; margin-left: 0; padding-left: 9px; }
.r1 { display: flex; align-items: center; margin: 8px 0 0 3px; }
.bigA { font-size: 16px; margin-left: 1px; line-height: 21px; width: 21px; white-space: nowrap; }
.smA { font-size: 13px; margin-left: 1px; line-height: 21px; white-space: nowrap; }
.r1 sup { font-size: 7px; line-height: 0; }
.r2 { display: flex; align-items: center; gap: 5px; margin: 7px 0 0 4px; height: 20px; }
.fb { font-size: 14px; font-family: "Liberation Sans", sans-serif; width: 14px; text-align: center; }
.fi { font-size: 14px; font-family: "Liberation Serif", serif; width: 14px; text-align: center; margin-left: 2px; }
.fu { font-size: 14px; width: 13px; text-align: center; margin-left: 1px; }
.ic14 { width: 14px; height: 14px; }
.ic-fill { margin-left: 2px; }
.vsep { width: 1px; height: 16px; background: #dcdcdc; flex: none; }
.colorA { font-size: 15px; margin-left: 4px; }

.a-row { display: flex; align-items: center; white-space: nowrap; }
.a-top { margin: 7px 0 0 5px; height: 21px; gap: 6px; }
.a-bot { margin: 10px 0 0 5px; height: 21px; gap: 6px; }
.al { width: 14px; height: 12px; }
.vsep-mid { margin-left: 11px; visibility: hidden; }
.wr { width: 16px; height: 15px; margin-left: -3px; margin-right: -3px; }
.mg { width: 16px; height: 15px; margin-left: -2px; margin-right: -3px; }
.mg-t { letter-spacing: .05px; }

.c-gen { width: 117px; margin: 8px 0 0 2px; padding-left: 2px; }
.c-gen i { width: 10px; }
.n-row { display: flex; align-items: center; margin: 6px 0 0 9px; gap: 5px; height: 22px; }
.sym { font-size: 16px; }
.pct { margin-left: 2px; }
.comma { font-size: 16px; margin: -6px 5px 0 4px; color: #777; }
.dec { font-size: 8px; line-height: 9.500px; margin-left: 1px; white-space: nowrap; color: #999; letter-spacing: 0; }

.big { display: flex; flex-direction: column; align-items: center; white-space: nowrap; text-align: center; line-height: 16px; }
.big span { margin-top: 4px; }
.bi { width: 30px; height: 30px; margin-top: 2px; }
.big-row { align-items: flex-start; }
.w-cond { width: 62px; margin-left: 6px; }
.w-fmt { width: 64px; }
.w-cell { width: 36px; }
.w-ins { width: 40px; margin-left: 1px; }
.w-del { width: 36px; }
.w-fm { width: 44px; }

.edit-col { margin-left: 5px; width: 81px; display: flex; flex-direction: column; }
.e-row { height: 20.500px; display: flex; align-items: center; white-space: nowrap; gap: 3px; }
.sigma { font-size: 18px; color: #333; width: 15px; font-family: "DejaVu Sans", sans-serif; line-height: 16px; }
.ci2 { width: 15px; height: 15px; }
.w-sort { width: 40px; }
.w-find { width: 40px; }
.w-find .bi { width: 28px; height: 28px; margin-top: 5px; }
.bi-sort { margin-top: 3px; }
.w-sort span { margin-top: 3px; }
.w-find span { margin-top: 3px; }
.collapse { margin-left: auto; align-self: flex-end; padding: 0 8px 6px 0; }
.coll { width: 9px; height: 6px; }

/* formula bar */
.fbar { height: 43px; flex: none; padding: 10px 4px 10px 4px; display: flex; background: #e6e6e6; }
.namebox { width: 102px; background: #fff; border: 1px solid #d4d4d4; display: flex; align-items: center; justify-content: space-between; padding: 0 8px 0 4px; font-size: 13px; color: #444; }
.namebox .car { color: #666; }
.dots { width: 2px; height: 12px; margin: 5px 15px 0 14px; border-left: 2px dotted #aaa; }
.fbtns { width: 108px; background: #fff; border: 1px solid #d4d4d4; display: flex; align-items: center; }
.fx-x { width: 12px; height: 12px; margin-left: 11px; }
.fx-c { width: 14px; height: 12px; margin-left: 23px; }
.fx-f { font-family: "Liberation Serif", serif; font-style: italic; font-size: 15px; margin-left: 22px; color: #444; }
.finput { flex: 1; background: #fff; border: 1px solid #d4d4d4; margin-left: 3px; display: flex; align-items: center; padding: 0 5px 0 10px; justify-content: space-between; font-size: 13px; color: #444; }
.chev { width: 10px; height: 6px; }

/* main */
.main { height: 480px; flex: none; display: flex; }
.panel { width: 245px; flex: none; padding: 0 12px; display: flex; flex-direction: column; background: #e6e6e6; }
.p-title { margin: 8px 0 0; font-size: 20px; font-weight: 300; color: #217346; line-height: 28px; letter-spacing: -.2px; white-space: nowrap; }
.p-desc { margin: 8px 0 0; font-size: 10.500px; line-height: 14px; color: #666; width: 215px; letter-spacing: -.28px; }
.p-sub { margin: 11px 0 0; font-size: 12px; font-weight: 700; color: #444; line-height: 15px; border-bottom: 1px solid #cfcfcf; padding-bottom: 1px; letter-spacing: -.2px; }
.flist { margin: 2px 0 0 10px; width: 211px; height: 275px; background: #fff; border: 1px solid #ababab; padding: 3px 0 0 7px; }
.fitem { display: flex; height: 68px; font-size: 10.500px; line-height: 15.500px; color: #444; letter-spacing: -.26px; white-space: nowrap; }
.xi { width: 12px; height: 12px; margin: 1px 5px 0 0; }
.p-help { margin-top: 45px; display: flex; align-items: center; gap: 4px; color: #4a6f9c; font-size: 10.500px; margin-left: 1px; letter-spacing: -.25px; white-space: nowrap; }
.hi { width: 15px; height: 15px; }
.p-foot { display: flex; justify-content: flex-end; margin-top: 5px; }
.close { width: 46px; height: 24px; background: #fdfdfd; border: 1px solid #c8c8c8; font: 11px "Open Sans", sans-serif; color: #555; padding: 0; }

.work { flex: 1; display: flex; flex-direction: column; position: relative; min-width: 0; }
.sheet-top { flex: 1; display: flex; min-height: 0; }
.sheet { flex: 1; min-width: 0; display: flex; flex-direction: column; overflow: hidden; background: #fff; }
.colhead { height: 19px; flex: none; display: flex; background: #e6e6e6; overflow: hidden; }
.corner { width: 28px; flex: none; padding: 4px 0 0 13px; border-right: 1px solid #d4d4d4; }
.tri { width: 13px; height: 13px; }
.ch { width: 64px; flex: none; text-align: center; font-size: 13px; line-height: 20px; color: #444; border-right: 1px solid #d4d4d4; padding-left: 1px; }
.ch.cb { width: 76px; }
.ch.active { background: #d2d2d2; color: #1f6b41; border-bottom: 1px solid #217346; }
.rows { flex: 1; min-height: 0; overflow: hidden; }
.row { display: flex; height: 19.350px; border-bottom: 1px solid #dcdcdc; font-family: Lato, "Open Sans", sans-serif; font-size: 13.500px; color: #222; }
.rh { width: 28px; flex: none; background: #e6e6e6; border-right: 1px solid #d4d4d4; text-align: center; font-family: "Open Sans", sans-serif; font-size: 13px; line-height: 19px; color: #444; padding-right: 2px; }
.rh-on { background: #d2d2d2; color: #1f6b41; border-right: 1px solid #217346; }
.c { flex: none; text-align: center; line-height: 20px; white-space: nowrap; border-right: 1px solid #dcdcdc; }
.c.ca { width: 64px; }
.c.cb { width: 76px; }
.row .d { border-right: 1px solid #555; box-shadow: 0 1px 0 #555; position: relative; }
.row .c.ca.d { border-left: 1px solid #555; }
.row .sel { box-shadow: none; outline: 2px solid #217346; outline-offset: -1px; }
.fill { flex: 1; background: repeating-linear-gradient(to right, transparent 0 63px, #dcdcdc 63px 64px); }
.vscroll { width: 19px; flex: none; padding: 2px 2px 0 0; display: flex; flex-direction: column; background: #e6e6e6; }
.sb-btn { height: 15px; background: #fdfdfd; border: 1px solid #d0d0d0; display: flex; align-items: center; justify-content: center; flex: none; }
.sb-a { width: 7px; height: 4px; }
.sb-thumb { height: 404px; background: #fff; border: 1px solid #ababab; flex: none; }
.sb-track { flex: 1; }
.sheettabs { height: 23px; flex: none; display: flex; align-items: center; background: #e6e6e6; border-top: 1px solid #c8c8c8; padding-left: 20px; position: relative; }
.nav { width: 4px; height: 7px; }
.nav2 { margin-left: 18px; margin-right: 31px; }
.st { height: 22px; padding: 0 11px; border-right: 1px solid #b8b8b8; display: flex; align-items: center; white-space: nowrap; font-size: 12px; color: #555; letter-spacing: .2px; margin-top: -2px; }
.st-on { background: #fff; color: #217346; font-weight: 700; border-bottom: 2px solid #217346; width: 86px; border-left: 1px solid #b8b8b8; justify-content: center; padding: 0; letter-spacing: -.1px; border-right: 0; margin-top: -1px; }
.st-cut { border-right: 0; padding-right: 0; padding-left: 10px; letter-spacing: .8px; }
.plus { width: 14px; height: 14px; margin-left: 11px; }
.hscroll { margin-left: 28px; width: 383px; height: 16px; display: flex; flex: none; }
.hb { width: 16px; height: 16px; flex: none; background: #fdfdfd; border: 1px solid #d0d0d0; display: flex; align-items: center; justify-content: center; }
.hba { width: 4px; height: 7px; }
.hthumb { width: 327px; background: #fff; border: 1px solid #ababab; }
.htrack { flex: 1; background: #e0e0e0; }

/* overlays */
.ac { position: absolute; left: 119px; top: 369px; width: 74px; height: 101px; background: #fff; border: 1px solid #b5b5b5; box-shadow: 1px 1px 2px rgba(0,0,0,.2); font-size: 10.500px; color: #444; z-index: 3; letter-spacing: -.22px; }
.ac-i { height: 16.600px; display: flex; align-items: center; padding-left: 2px; }
.fxi { width: 16px; height: 16px; }
.ac-i span { flex: 1; height: 100%; display: flex; align-items: center; padding-left: 1px; }
.ac-on { background: #0d74d1; color: #fff; }
.tip { position: absolute; left: 198px; top: 366px; width: 610px; height: 21px; background: #fff; border: 1px solid #d2d2d2; padding-left: 6px; line-height: 18px; font-size: 11.800px; color: #555; letter-spacing: -.22px; white-space: nowrap; z-index: 3; box-shadow: 1px 1px 1px rgba(0,0,0,.1); }
.cursor { position: absolute; left: 142px; top: 351px; width: 14px; height: 14px; z-index: 4; }
.handle { position: absolute; left: 167px; top: 366px; width: 4px; height: 4px; background: #217346; z-index: 2; }

/* status */
.status { height: 21px; flex: none; background: #f1f1f1; border-top: 1px solid #d4d4d4; display: flex; align-items: center; padding-left: 5px; font-size: 10.500px; color: #777; }
.s-macro { width: 14px; height: 12px; margin-left: 17px; }
.s-right { margin-left: auto; display: flex; align-items: center; padding-right: 4px; }
.vw { width: 12px; height: 13px; margin-right: 25px; }
.zoom { display: flex; align-items: center; width: 120px; margin-left: -21px; }
.z-m { width: 7px; height: 2px; background: #bbb; margin-right: 2px; }
.z-line { flex: 1; height: 1px; background: #bbb; position: relative; }
.z-line i { position: absolute; left: 50%; top: -3px; width: 1px; height: 7px; background: #bbb; }
.z-p { color: #aaa; font-size: 15px; line-height: 14px; margin-left: 2px; }
.z-val { margin-left: 12px; color: #bbb; font-size: 10.500px; }

/* taskbar */
.taskbar { height: 31px; flex: none; background: #000; display: flex; align-items: center; }
.tb-left { display: flex; align-items: center; gap: 18px; padding-left: 19px; }
.ti { width: 20px; height: 20px; }
.ti-win { width: 16px; height: 16px; }
.ti-search { margin-left: -7px; width: 18px; height: 18px; }
.ti-view { margin-left: -2px; }
.t-run { height: 31px; display: flex; align-items: center; border-bottom: 2px solid #8ab4d8; }
.t-active { background: #333; height: 31px; width: 37px; margin: 0 -9px 0 -9px; display: flex; align-items: center; justify-content: center; border-bottom: 2px solid #8ab4d8; }
.tb-right { margin-left: auto; display: flex; align-items: center; padding-right: 16px; color: #ddd; }
.slot { width: 32px; display: flex; justify-content: center; }
.ti16 { width: 17px; height: 17px; }
.t-text { text-align: center; font-size: 12px; letter-spacing: -.3px; white-space: nowrap; }
.t-eng { width: 42px; }
.t-time { width: 46px; }
.t-note { width: 34px; margin-left: 18px; display: flex; justify-content: center; }
.ti-note { width: 16px; height: 18px; }
```
